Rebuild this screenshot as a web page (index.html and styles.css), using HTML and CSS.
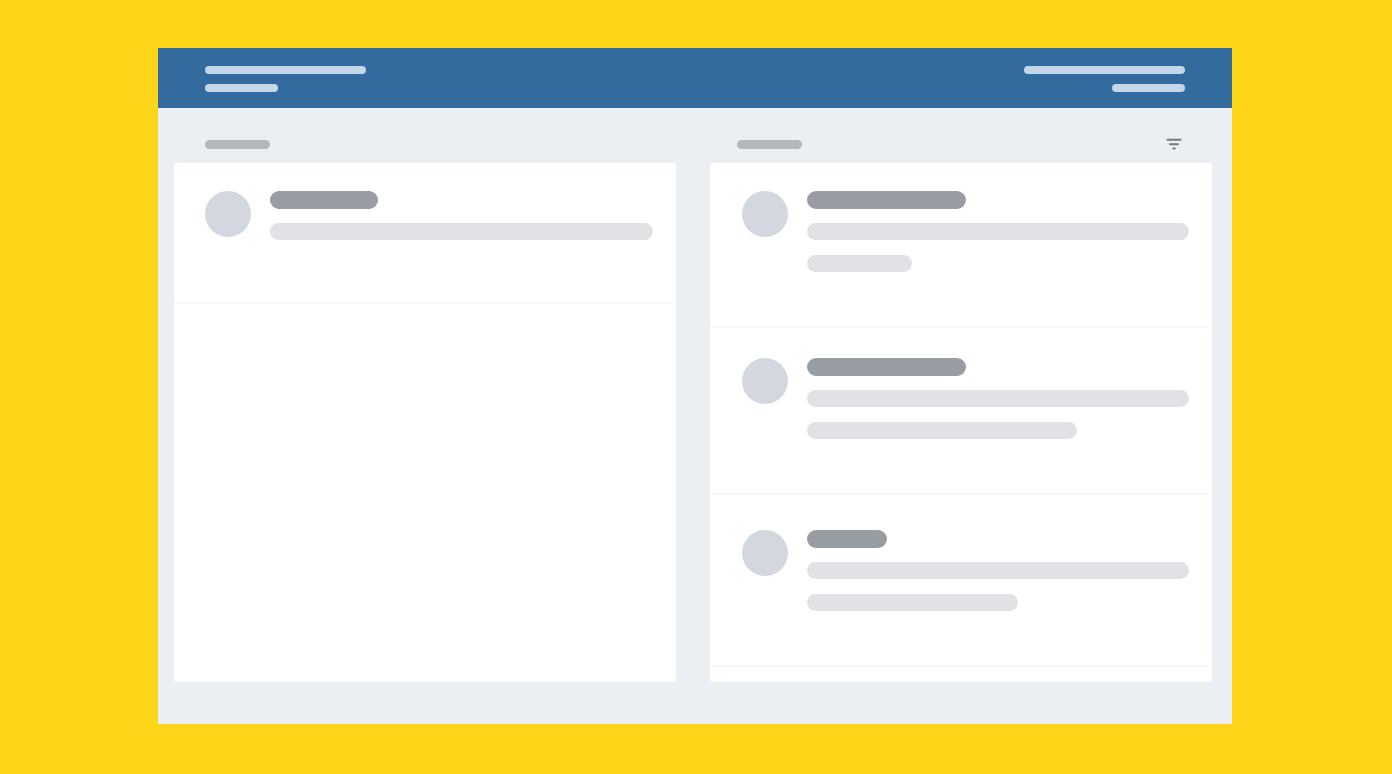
FILE: index.html
```html
<!DOCTYPE html>
<html lang="en">
<head>
<meta charset="utf-8">
<meta name="viewport" content="width=device-width, initial-scale=1">
<link rel="stylesheet" href="styles.css">
</head>
<body>
<div class="window">
  <header class="topbar">
    <div class="topbar-group">
      <span class="topbar-line topbar-line-long"></span>
      <span class="topbar-line topbar-line-short"></span>
    </div>
    <div class="topbar-group topbar-group-end">
      <span class="topbar-line topbar-line-long"></span>
      <span class="topbar-line topbar-line-short"></span>
    </div>
  </header>
  <main class="columns">
    <section class="column column-start">
      <div class="column-head"><span class="label"></span></div>
      <div class="panel">
        <article class="item item-single">
          <span class="avatar"></span>
          <div class="lines">
            <span class="title title-medium"></span>
            <span class="line"></span>
          </div>
        </article>
      </div>
    </section>
    <section class="column column-end">
      <div class="column-head">
        <span class="label"></span>
        <button class="filter" type="button" aria-label="Filter">
          <svg width="16" height="12" viewBox="0 0 16 12" fill="none" stroke="#747a80" stroke-width="2" stroke-linecap="round" aria-hidden="true"><path d="M1.5 1.7h13M4 6.2h8M7.2 10.4h1.6"/></svg>
        </button>
      </div>
      <div class="panel">
        <article class="item item-first">
          <span class="avatar"></span>
          <div class="lines">
            <span class="title title-long"></span>
            <span class="line"></span>
            <span class="line line-short"></span>
          </div>
        </article>
        <article class="item item-second">
          <span class="avatar"></span>
          <div class="lines">
            <span class="title title-long"></span>
            <span class="line"></span>
            <span class="line line-long"></span>
          </div>
        </article>
        <article class="item item-third">
          <span class="avatar"></span>
          <div class="lines">
            <span class="title title-short"></span>
            <span class="line"></span>
            <span class="line line-medium"></span>
          </div>
        </article>
      </div>
    </section>
  </main>
</div>
</body>
</html>
```
FILE: styles.css
```css
* {
  box-sizing: border-box;
}

body {
  margin: 0;
  min-height: 100vh;
  padding: 48px 160px 50px 158px;
  display: flex;
  background: #ffd51a;
  font-family: "Liberation Sans", Arial, sans-serif;
}

.window {
  flex: 1;
  display: flex;
  flex-direction: column;
  background: #ebeef2;
}

.topbar {
  display: flex;
  justify-content: space-between;
  padding: 18px 47px 16px;
  background: #336b9f;
}

.topbar-group {
  display: flex;
  flex-direction: column;
  gap: 10px;
}

.topbar-group-end {
  align-items: flex-end;
}

.topbar-line {
  height: 8px;
  border-radius: 4px;
  background: #c2d8e9;
}

.topbar-line-long {
  width: 161px;
}

.topbar-line-short {
  width: 73px;
}

.columns {
  flex: 1;
  display: grid;
  grid-template-columns: 1fr 1fr;
  gap: 34px;
  padding: 0 20px 42px 16px;
}

.column {
  display: flex;
  flex-direction: column;
}

.column-head {
  display: flex;
  align-items: center;
  justify-content: space-between;
  height: 55px;
  padding: 17px 30px 0 27px;
}

.column-start .column-head {
  padding-left: 31px;
}

.label {
  width: 65px;
  height: 9px;
  border-radius: 5px;
  background: #b3b7be;
}

.filter {
  display: flex;
  padding: 0;
  border: 0;
  background: none;
  cursor: pointer;
}

.panel {
  flex: 1;
  border-radius: 2px;
  background: #fff;
}

.item {
  display: flex;
  gap: 19px;
  padding: 28px 23px 54px 32px;
  border-bottom: 2px solid #f8f9fa;
}

.item-single {
  padding-left: 31px;
  padding-bottom: 62px;
}

.item-second {
  padding-top: 30px;
}

.item-third {
  padding-top: 35px;
}

.avatar {
  flex: none;
  width: 46px;
  height: 46px;
  border-radius: 50%;
  background: #d3d7df;
}

.lines {
  flex: 1;
  display: flex;
  flex-direction: column;
  gap: 15px;
}

.title,
.line {
  height: 17px;
  border-radius: 9px;
}

.title {
  height: 18px;
  margin-bottom: -1px;
  background: #989ca3;
}

.title-short {
  width: 80px;
}

.title-medium {
  width: 108px;
}

.title-long {
  width: 159px;
}

.line {
  background: #e1e1e6;
}

.line-short {
  width: 105px;
}

.line-medium {
  width: 211px;
}

.line-long {
  width: 270px;
}
```
